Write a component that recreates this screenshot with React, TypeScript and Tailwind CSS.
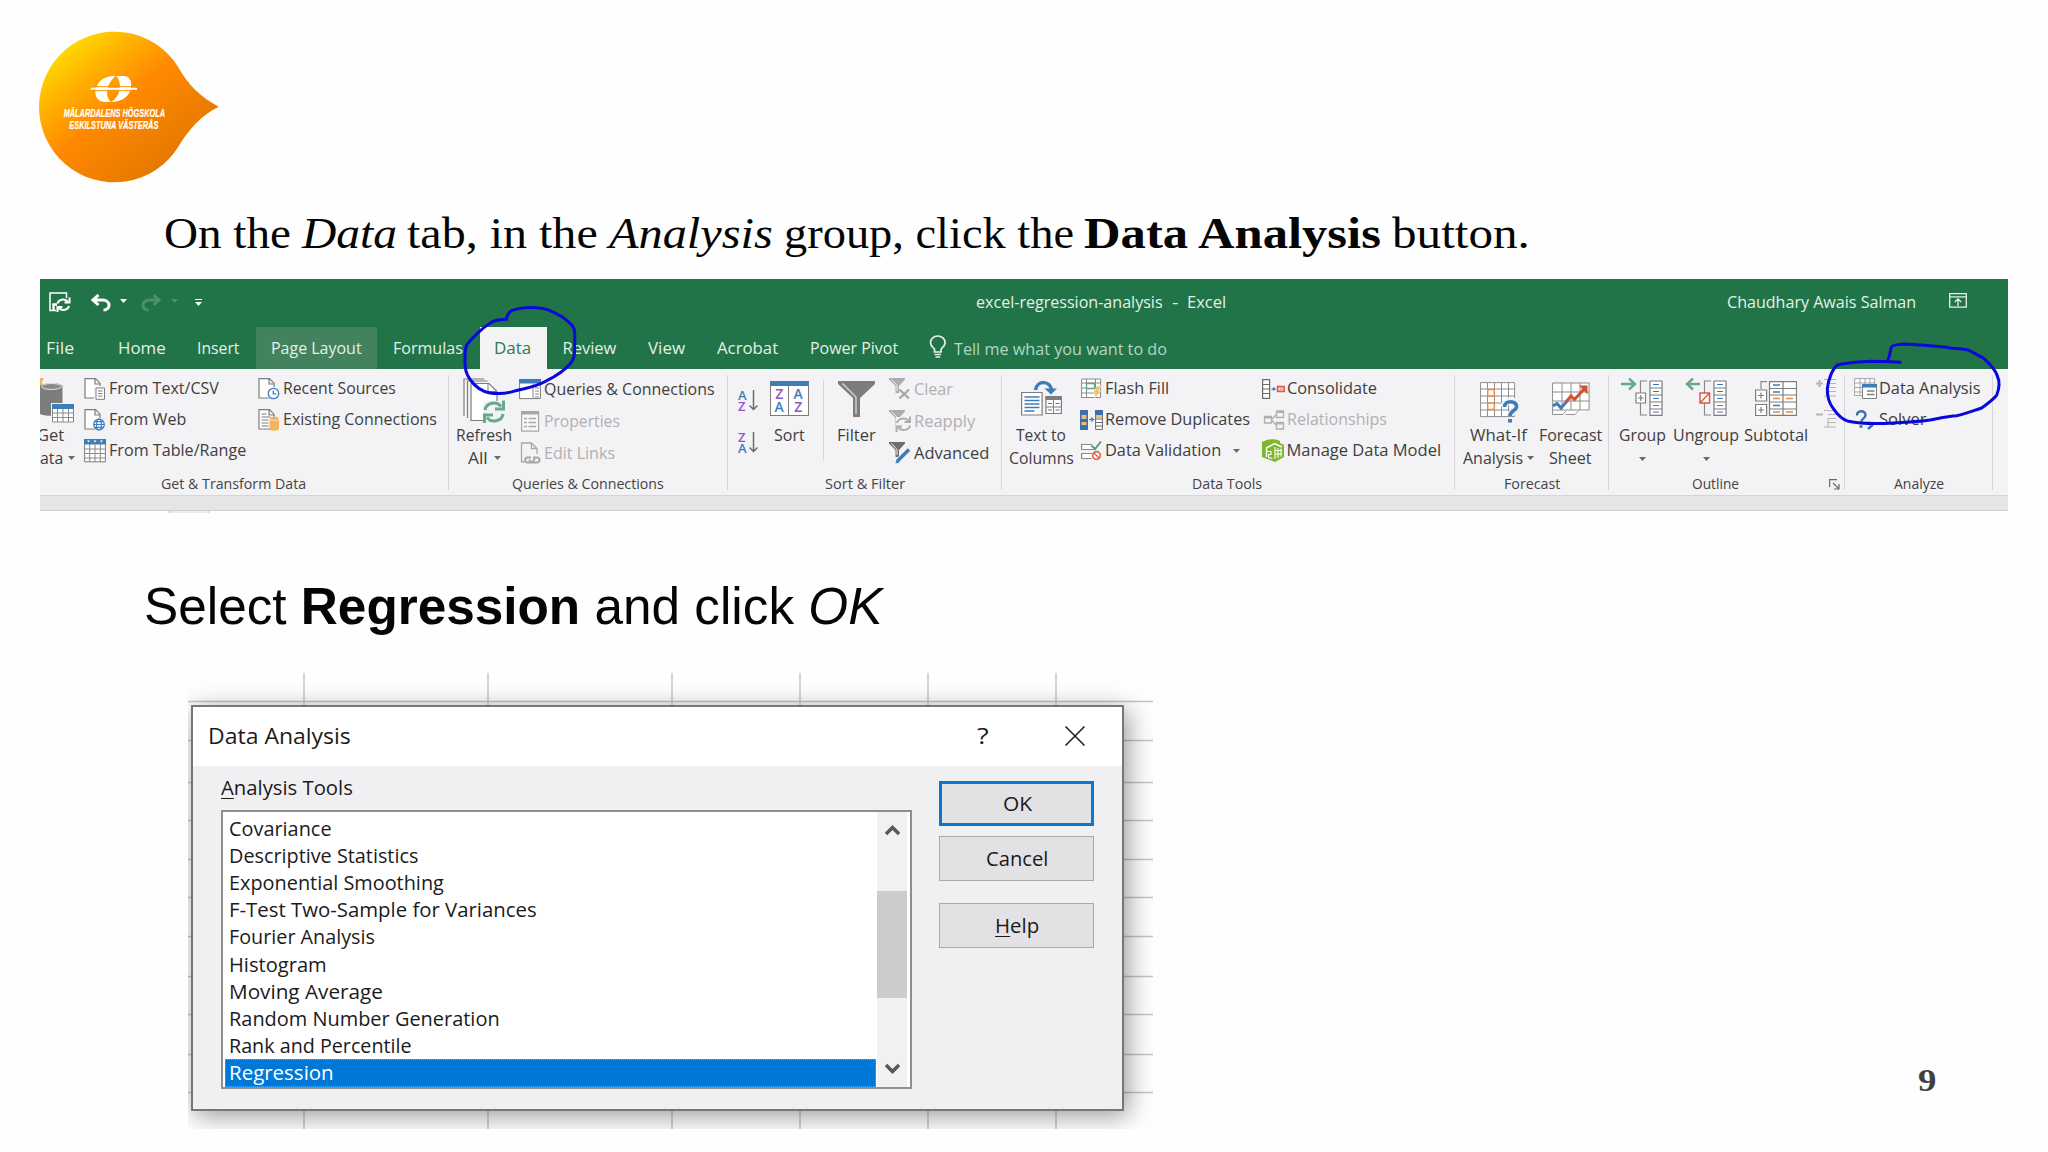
import { ReactNode, useLayoutEffect, useRef, useState } from 'react';
import clsx from 'clsx';

type TextProps = {
  w: number;
  children: ReactNode;
  className?: string;
};

// Single line of text, stretched or squeezed to a fixed width
const Text = ({ w, children, className }: TextProps) => {
  const ref = useRef<HTMLSpanElement>(null);
  const [scale, setScale] = useState(1);

  useLayoutEffect(() => {
    if (ref.current && ref.current.offsetWidth > 0) {
      setScale(w / ref.current.offsetWidth);
    }
  }, [w]);

  return (
    <span
      className={clsx('inline-block shrink-0 whitespace-nowrap', className)}
      style={{ width: w }}
    >
      <span
        ref={ref}
        className="inline-block origin-left"
        style={{ transform: `scaleX(${scale})` }}
      >
        {children}
      </span>
    </span>
  );
};

const Caret = ({ className }: { className?: string }) => (
  <svg
    width="7"
    height="4"
    viewBox="0 0 7 4"
    className={clsx('shrink-0', className)}
  >
    <path d="M0 0h7L3.5 4z" fill="currentColor" />
  </svg>
);

const Logo = () => (
  <svg width="180" height="152" viewBox="58 63 540 456">
    <defs>
      <linearGradient id="drop" x1="0.08" y1="0.15" x2="0.75" y2="0.85">
        <stop offset="0" stopColor="#ffdc00" />
        <stop offset="0.22" stopColor="#ffb400" />
        <stop offset="0.5" stopColor="#ff8a00" />
        <stop offset="1" stopColor="#e67800" />
      </linearGradient>
    </defs>
    <path
      d="M475 170C505 225 545 262 597 290C545 316 505 360 475 412A226 226 0 1 1 475 170z"
      fill="url(#drop)"
    />
    <g fill="#fff">
      <path d="M288 198C252 197 229 216 227 246C227 264 238 275 257 276L274 275C256 262 258 222 288 198z" />
      <path d="M291 198L312 198C328 199 337 210 334 230C331 258 310 275 274 276C300 262 310 224 291 198z" />
    </g>
    <path d="M222 230H346M218 242H340" stroke="#ff9300" strokeWidth="3" />
    <path d="M213 236H352" stroke="#fff" strokeWidth="6" />
    <g
      fill="#fff"
      stroke="#fff"
      strokeWidth="0.7"
      fontFamily='"Liberation Sans Narrow", "Liberation Sans", sans-serif'
      fontWeight="700"
      fontStyle="italic"
      fontSize="33"
    >
      <text x="132" y="322" textLength="304" lengthAdjust="spacingAndGlyphs">
        MÄLARDALENS HÖGSKOLA
      </text>
      <text x="149" y="358" textLength="267" lengthAdjust="spacingAndGlyphs">
        ESKILSTUNA VÄSTERÅS
      </text>
    </g>
  </svg>
);

const SaveIcon = () => (
  <svg width="22" height="21" viewBox="0 0 22 21" fill="none" stroke="#fff">
    <path d="M7 18.500H1V1h16.500v5" strokeWidth="1.500" />
    <path d="M4.500 18v-5.500H8" strokeWidth="2.400" />
    <path
      d="M8.500 11.500c1-4 7-5.500 10-2M20.500 5.500v5h-5M20 14c-1 4-7 5.500-10 2M8.500 20v-5h5"
      strokeWidth="2.100"
    />
  </svg>
);

const UndoIcon = ({ className }: { className?: string }) => (
  <svg
    width="20"
    height="18"
    viewBox="0 0 20 18"
    fill="none"
    stroke="currentColor"
    strokeWidth="3"
    className={className}
  >
    <path d="M7.500 1L2 6l5.500 5M2.500 6h9c8.500 0 8.500 10 1 10" />
  </svg>
);

const BulbIcon = () => (
  <svg width="18" height="24" viewBox="0 0 18 24" fill="none" stroke="#e4f0e8">
    <path
      d="M5.500 17v-3C3 11.500 1.500 10.500 1.500 7.800a7.300 6.800 0 0 1 14.600 0c0 2.700-1.500 3.700-4 6.200v3z"
      strokeWidth="1.700"
    />
    <path d="M5.500 19.500h6.600M6.500 22h4.600" strokeWidth="1.500" />
  </svg>
);

const RibbonOptionsIcon = () => (
  <svg width="18" height="15" viewBox="0 0 18 15" fill="none" stroke="#e4f0e8" strokeWidth="1.300">
    <path d="M.7.700h16.600v13.400H.7zM.7 3.800h16.600M9 13V6M5.800 9L9 5.800 12.200 9" />
  </svg>
);

const GetDataIcon = () => (
  <svg width="34" height="46" viewBox="0 0 34 46">
    <path d="M0 1h4L1.500 6 4 7.500 0 12z" fill="#f2b45c" />
    <path d="M0 8.500C6 5 20 5 22.500 9v27c-3 3-17 4-22.500 1z" fill="#7d7d7d" />
    <ellipse cx="11.500" cy="9.500" rx="10" ry="3" fill="#8a8a8a" stroke="#e8e8e8" />
    <path d="M11 26h23v20H11z" fill="#f3f2f4" />
    <path d="M12.500 27.500h21v17.500h-21z" fill="#fff" stroke="#8a8a8a" />
    <path d="M12 27h22v5H12z" fill="#3f7cba" />
    <path d="M12 36h22M12 40.500h22M17.500 32v13M23 32v13M28.500 32v13" stroke="#8a8a8a" />
  </svg>
);

const Page = () => (
  <path d="M1 .700h10.500l4.500 4.500V20H1zM11 1v5h5" fill="#fff" stroke="#7d7d7d" strokeWidth="1.200" />
);

const TextFileIcon = () => (
  <svg width="22" height="22" viewBox="0 0 22 22">
    <Page />
    <path d="M11.500 9.500H21V21h-9.500z" fill="#fff" stroke="#f3f2f4" strokeWidth="3" />
    <path d="M12 10h8.500v11.300H12zM14 13h4.500M14 15.500h4.500M14 18h4.500" fill="#fff" stroke="#7d7d7d" />
  </svg>
);

const WebFileIcon = () => (
  <svg width="22" height="22" viewBox="0 0 22 22">
    <Page />
    <circle cx="15" cy="15.500" r="6.500" fill="#f3f2f4" />
    <g fill="#fff" stroke="#3f7fc4" strokeWidth="1.200">
      <circle cx="15" cy="15.500" r="5.300" />
      <ellipse cx="15" cy="15.500" rx="2.400" ry="5.300" />
      <path d="M9.700 15.500h10.600M10.500 12.700h9M10.500 18.300h9" />
    </g>
  </svg>
);

const TableIcon = () => (
  <svg width="22" height="24" viewBox="0 0 22 24">
    <path d="M.6.600h20.800v22.200H.6z" fill="#fff" stroke="#7d7d7d" />
    <path d="M0 0h22v5.500H0z" fill="#3f7cba" />
    <path d="M3 1.500h3l-1.500 2zM9.500 1.500h3l-1.500 2zM16 1.500h3l-1.500 2z" fill="#fff" />
    <path d="M0 10h22M0 14.500h22M0 19h22M5.700 5v18M11 5v18M16.300 5v18" stroke="#8a8a8a" />
  </svg>
);

const RecentIcon = () => (
  <svg width="22" height="22" viewBox="0 0 22 22">
    <Page />
    <circle cx="15.500" cy="15.500" r="6.500" fill="#f3f2f4" />
    <circle cx="15.500" cy="15.500" r="5.200" fill="#fff" stroke="#3f7fc4" strokeWidth="1.300" />
    <path d="M15.300 12.500v3.300h3" fill="none" stroke="#3f7fc4" strokeWidth="1.300" />
  </svg>
);

const ConnectionsIcon = () => (
  <svg width="22" height="22" viewBox="0 0 22 22">
    <Page />
    <path d="M3.500 5h5M3.500 8h9M3.500 11h7M3.500 14h7M3.500 17h7" stroke="#7d7d7d" />
    <path d="M11.500 10c0-3 9.500-3 9.500 0v9.500c0 3-9.500 3-9.500 0z" fill="#f2b45c" />
    <path d="M11.500 10c1 2 8.500 2 9.500 0" fill="none" stroke="#fbe3bd" />
  </svg>
);

const RefreshAllIcon = () => (
  <svg width="42" height="46" viewBox="0 0 42 46" fill="none">
    <path d="M1 39V2h20M4.500 41V4h20" stroke="#7d7d7d" strokeWidth="1.200" />
    <path d="M8 43.500V6.500h18l8 8v29z" fill="#fff" stroke="#7d7d7d" strokeWidth="1.200" />
    <path d="M25 6.500v8h8" stroke="#7d7d7d" />
    <path d="M20 24h22v22H20z" fill="#f3f2f4" />
    <path
      d="M22 33c1-7.500 12-9.500 16-3.500M40.500 23.500v8.500h-8.500M40 37c-1 7.500-12 9.500-16 3.500M21.500 46.500v-8.500h8.500"
      stroke="#67a98a"
      strokeWidth="3"
    />
  </svg>
);

const QueriesIcon = () => (
  <svg width="22" height="21" viewBox="0 0 22 21">
    <path d="M.6.600h20.800v19H.6z" fill="#fff" stroke="#7d7d7d" />
    <path d="M0 0h22v4.500H0z" fill="#3f7cba" />
    <path d="M14 5v15M16 9h4M16 12h4M16 15h4M16 18h4" stroke="#8a8a8a" />
  </svg>
);

const PropertiesIcon = () => (
  <svg width="22" height="21" viewBox="0 0 22 21" stroke="#a8a8a8">
    <path d="M2.600.600h17v19.500h-17z" fill="#f8f6f8" strokeWidth="1.200" />
    <path d="M2.500 2h17" strokeWidth="3" />
    <path d="M5 7.500h3M5 11.500h3M5 15.500h3M9.500 7.500h7.500M9.500 11.500h7.500M9.500 15.500h7.500" strokeWidth="1.300" />
  </svg>
);

const EditLinksIcon = () => (
  <svg width="22" height="22" viewBox="0 0 22 22" fill="none" stroke="#a8a8a8">
    <path d="M5 20H2.500V1h10l5.500 5.500V12M12.500 1v5.500H18" strokeWidth="1.300" />
    <path
      d="M12 15.500H8.500a2.500 2.500 0 0 0 0 5H12M14 15.500h4a2.500 2.500 0 0 1 0 5h-4M10 18l3 2.500 3-4"
      strokeWidth="2"
    />
  </svg>
);

const letterColor = (letter: string) => (letter === 'A' ? 'text-[#3f7cba]' : 'text-[#9455c8]');

const SortOrderIcon = ({ first, second }: { first: string; second: string }) => (
  <span className="flex h-[23px] w-5 items-center justify-between">
    <span className="flex flex-col text-[13px] leading-[11px] font-semibold">
      <span className={letterColor(first)}>{first}</span>
      <span className={letterColor(second)}>{second}</span>
    </span>
    <svg width="9" height="23" viewBox="0 0 9 23">
      <path d="M4.500 1v20M.5 16.500l4 4 4-4" fill="none" stroke="#6b6b6b" strokeWidth="1.500" />
    </svg>
  </span>
);

const SortIcon = () => (
  <span className="flex h-[35px] w-[39px] border border-t-[5px] border-[#7d7d7d] border-t-[#3f7cba] bg-white text-[14px] leading-[12.500px] font-semibold">
    <span className="flex w-[18.500px] flex-col items-center justify-center border-r border-[#7d7d7d]">
      <span className={letterColor('Z')}>Z</span>
      <span className={letterColor('A')}>A</span>
    </span>
    <span className="flex w-[18.500px] flex-col items-center justify-center">
      <span className={letterColor('A')}>A</span>
      <span className={letterColor('Z')}>Z</span>
    </span>
  </span>
);

const FilterIcon = () => (
  <svg width="37" height="36" viewBox="0 0 37 36">
    <path d="M0 0h37v3L22 17v19h-7V17L0 3z" fill="#7d7d7d" />
    <path d="M4.500 2.500L18 16v17" fill="none" stroke="#d8d8d8" strokeWidth="1.300" />
  </svg>
);

const FilterActionIcon = ({ action }: { action: 'clear' | 'reapply' | 'advanced' }) => (
  <svg width="22" height="22" viewBox="0 0 22 22" fill="none">
    <path
      d="M0 0h16v1.500L10 8v7H6.500V8L0 1.500z"
      fill={action === 'advanced' ? '#6e6e6e' : '#acacac'}
    />
    <path d="M2.500 1.500L8 7.500V13" stroke="#f3f2f4" />
    {action === 'clear' && (
      <path d="M10.500 11.500l9.500 9M20 11.500l-9.500 9" stroke="#a8a8a8" strokeWidth="2.400" />
    )}
    {action === 'reapply' && (
      <>
        <path d="M7 7h15v15H7z" fill="#f3f2f4" />
        <path
          d="M8 13c1-5 9-6 11.500-2M21 6.500v5.500h-5.500M21 15.500c-1 5-9 6-11.500 2M7.500 22v-5.500H13"
          stroke="#acacac"
          strokeWidth="2"
        />
      </>
    )}
    {action === 'advanced' && (
      <>
        <path d="M8 20L19.500 8.500" stroke="#f3f2f4" strokeWidth="6" />
        <path d="M8.500 19L20 7.500" stroke="#3f7cba" strokeWidth="3.600" />
        <path d="M6.500 21.500l1-4 3 3z" fill="#3f7cba" />
      </>
    )}
  </svg>
);

const TextToColumnsIcon = () => (
  <svg width="41" height="36" viewBox="0 0 41 36" fill="none">
    <path d="M.6 12.500h20.500V35H.6z" fill="#fff" stroke="#7d7d7d" strokeWidth="1.200" />
    <path d="M3.500 17h15M3.500 20.500h15M3.500 24h15M3.500 27.500h15M3.500 31h10" stroke="#3f7cba" strokeWidth="1.300" />
    <path d="M25 17h15.400v16.500H25z" fill="#fff" stroke="#7d7d7d" strokeWidth="1.200" />
    <path d="M24.500 18h16" stroke="#7d7d7d" strokeWidth="4" />
    <path d="M32.500 20v13M25 27h15" stroke="#7d7d7d" />
    <path d="M27 23.500h4M34.500 23.500h4M27 30h4M34.500 30h4" stroke="#3f7cba" />
    <path d="M14.500 10C16 0 30 0 30.500 11" stroke="#3f7cba" strokeWidth="3.500" />
    <path d="M23.500 8.500h12.500L30 14.500z" fill="#3f7cba" />
  </svg>
);

const FlashFillIcon = () => (
  <svg width="22" height="21" viewBox="0 0 22 21" fill="none">
    <path d="M1.600 1h19v18.500h-19zM1.600 5h19M1.600 10h19M1.600 15h19M6.500 1v18.500M15.500 1v18.500" fill="#fff" stroke="#8a8a8a" />
    <path d="M6.500 5.500h8v5h-8z" fill="#fff" stroke="#5aa584" strokeWidth="1.300" />
    <path d="M17 8h4.500l-3 5H21l-7 8 2-6h-3z" fill="#f5c162" stroke="#f3f2f4" strokeWidth=".5" />
  </svg>
);

const RemoveDuplicatesIcon = () => (
  <svg width="23" height="20" viewBox="0 0 23 20">
    <path d="M0 0h8v20H0z" fill="#3f6fa6" />
    <path d="M1.500 5h5v4h-5zM1.500 12h5v3h-5z" fill="#eebb7e" />
    <path d="M15.600.600h6.800v18.800h-6.800z" fill="#fff" stroke="#6b6b6b" />
    <path d="M15 0h8v5h-8z" fill="#3f6fa6" />
    <path d="M16 5h6v3h-6z" fill="#eebb7e" />
    <path d="M15 9h8M15 12.500h8M15 16h8" stroke="#6b6b6b" />
    <path d="M9 9.500h4M11 7.500l2.500 2-2.500 2" fill="none" stroke="#3f7cba" strokeWidth="1.200" />
  </svg>
);

const DataValidationIcon = () => (
  <svg width="22" height="20" viewBox="0 0 22 20" fill="none">
    <path d="M12 3.500H1.600v5h13M12 12.500H1.600v5h10" fill="#fff" stroke="#8a8a8a" strokeWidth="1.200" />
    <path d="M11.500 4.500l3.500 3.500L21 .500" stroke="#4fa283" strokeWidth="2" />
    <circle cx="16.500" cy="14.500" r="3.800" fill="#fff" stroke="#e0654c" strokeWidth="1.700" />
    <path d="M14 12l5 5" stroke="#e0654c" strokeWidth="1.500" />
  </svg>
);

const ConsolidateIcon = () => (
  <svg width="23" height="20" viewBox="0 0 23 20" fill="none">
    <path d="M.6.600h7v18.800h-7zM.6 5.500h7M.6 10h7M.6 14.500h7" fill="#fff" stroke="#6b6b6b" strokeWidth="1.200" />
    <path d="M9.500 10h3.500M11.500 8.500L13 10l-1.500 1.500" stroke="#3f7cba" strokeWidth="1.300" />
    <path d="M15.600 7.600h6.600v4.800h-6.600z" fill="#fff" stroke="#dc5a44" strokeWidth="1.700" />
    <path d="M17.500 10h3" stroke="#dc5a44" />
  </svg>
);

const RelationshipsIcon = () => (
  <svg width="23" height="20" viewBox="0 0 23 20" fill="none" stroke="#b0b0b0" strokeWidth="1.300">
    <path d="M2.500 6.500h7v6.500h-7zM14.500 1h7v6.500h-7zM14.500 12.500h7V19h-7zM9.500 9.500l5-5M9.500 10l5 5.500" />
    <path d="M2.500 7.500h7M14.500 2h7M14.500 13.500h7" strokeWidth="2" />
  </svg>
);

const DataModelIcon = () => (
  <svg width="22" height="23" viewBox="0 0 22 23" fill="none">
    <path d="M0 3C5 0 12-1 18 2v2l4 2v12l-9 5-13-5z" fill="#7db72f" />
    <path d="M4.500 18V9l8-4.500L20 8" stroke="#fff" strokeWidth="1.500" />
    <path d="M13 8v12M16 9v10M19 9.500v8M13 11.500h7M13 15h7M5 12.500h4v3H6.500v3l4 1" stroke="#fff" strokeWidth="1.100" />
  </svg>
);

const WhatIfIcon = () => (
  <svg width="39" height="41" viewBox="0 0 39 41" fill="none">
    <path d="M.6.600h34v34H.6z" fill="#fff" />
    <path
      d="M.6.600h34v34H.6zM.6 7h34M.6 14h34M.6 21h34M.6 28h34M7.500.600v34M14.500.600v34M21.500.600v34M28.500.600v34"
      stroke="#8e8e8e"
    />
    <path d="M7.700 7.500h6.600v6.500H7.700zM7.700 21h6.600v6.500H7.700z" fill="#fff" stroke="#ea8b43" strokeWidth="1.500" />
    <path d="M24 25c0-8 14-8 13 0-.5 4-6.500 4-6.500 9" stroke="#f3f2f4" strokeWidth="7" />
    <path d="M24.500 25c0-7 12.500-7 12 0-.5 4-6.500 4-6.500 9" stroke="#3f7cba" strokeWidth="3.700" />
    <path d="M28 37h4v3.500h-4z" fill="#3f7cba" />
  </svg>
);

const ForecastIcon = () => (
  <svg width="38" height="34" viewBox="0 0 38 34" fill="none">
    <path d="M.6 1h36.500v27L34 29l-8 3H.6z" fill="#fff" />
    <path
      d="M.6 1h36.500v27H.6zM.6 10h36.500M.6 19h36.500M10 1v27M19 1v27M28 1v27M.6 28v4.500H11l3-3.500M14 32.500h9l4-4"
      stroke="#8e8e8e"
    />
    <path d="M1 24l4-2.500 4 4.500 7-8" stroke="#3f7cba" strokeWidth="3" />
    <path d="M14 20l5-6 3.500 3.500L33 6" stroke="#d35230" strokeWidth="3" />
    <path d="M27 3.500h8.500v9z" fill="#d35230" />
  </svg>
);

const GroupIcon = ({ ungroup }: { ungroup?: boolean }) => (
  <svg width="42" height="38" viewBox="0 0 42 38" fill="none">
    <path
      d={ungroup ? 'M15 6H2M8 .500L2 6l6 5.500' : 'M0 6h14M8 .500L14 6l-6 5.500'}
      stroke="#67a98a"
      strokeWidth="2.400"
    />
    <path d="M26 3h-6.500v12M26 37h-6.500V25" stroke="#8a8a8a" strokeWidth="1.200" />
    {ungroup ? (
      <path d="M15 15h9.500v10H15zM15.500 24.500l8.500-9" fill="#fff" stroke="#dc5a44" strokeWidth="1.500" />
    ) : (
      <path d="M15 15h9.500v10H15zM17 20h5.500M19.800 17v6" fill="#fff" stroke="#7d7d7d" strokeWidth="1.200" />
    )}
    <path
      d="M29 3h12v34.400H29zM29 10h12M29 17h12M29 24h12M29 31h12"
      fill="#fff"
      stroke="#7d7d7d"
      strokeWidth="1.200"
    />
    <path d="M32 6.500h6M32 13.500h6M32 20.500h6M32 27.500h6M32 34h6" stroke="#3f7cba" strokeWidth="1.200" />
  </svg>
);

const SubtotalIcon = () => (
  <svg width="42" height="35" viewBox="0 0 42 35" fill="none">
    <path d="M12 .600H6V8" stroke="#8a8a8a" strokeWidth="1.200" />
    <path
      d="M.6 9h11v11H.6zM.6 23.500h11v11H.6zM3 14.500h6M6 11.500v6M3 29h6M6 26v6M14.500.600h27v33.800h-27zM14.500 7.500h27M14.500 14h27M14.500 21h27M14.500 28h27M28 .600v33.800"
      fill="#fff"
      stroke="#7d7d7d"
      strokeWidth="1.200"
    />
    <path d="M18 4h7M18 11h7M18 24.500h7" stroke="#3f7cba" strokeWidth="1.300" />
    <path d="M18 17.500h7M31 17.500h7M18 31h7M31 31h7" stroke="#e08a4c" strokeWidth="1.300" />
  </svg>
);

const DetailIcon = ({ hide }: { hide?: boolean }) => (
  <svg width="20" height="19" viewBox="0 0 20 19" fill="none" stroke="#b4b4b4">
    <path d={hide ? 'M0 5.500h7' : 'M0 5.500h7M3.500 2v7'} strokeWidth="2" />
    <path d="M8 1.500h12" stroke={hide ? '#d9a7cf' : '#b4b4b4'} />
    <path d="M12 5.500h8M12 9.500h8M12 13.500h8M8 18h12M12 9v9" />
  </svg>
);

const DataAnalysisIcon = () => (
  <svg width="23" height="21" viewBox="0 0 23 21" fill="none">
    <path d="M.6.600h20v17H.6zM.6 5h20M.6 9.500h20M.6 14h20M6 .600v17M11 .600v17M16 .600v17" fill="#fff" stroke="#a5a5a5" />
    <path d="M8.500 6.500h14v14h-14z" fill="#fff" stroke="#7d7d7d" />
    <path d="M8 6h15v3.500H8z" fill="#3f7cba" />
    <path d="M13 13h7.500M13 16.500h7.500" stroke="#7d7d7d" strokeWidth="1.300" />
  </svg>
);

const SolverIcon = () => (
  <svg width="23" height="20" viewBox="0 0 23 20" fill="none" stroke="#3f6fb0">
    <path d="M3 5.500C3 0 11.500 0 11.500 5c0 3.500-4.500 3.500-4.500 8" strokeWidth="2.400" />
    <path d="M5.500 16.500h3" strokeWidth="2.600" />
    <path d="M14 12.500l4 3-4 3.500" strokeWidth="2.400" />
  </svg>
);

const LauncherIcon = () => (
  <svg width="11" height="11" viewBox="0 0 11 11" fill="none" stroke="#6b6b6b" strokeWidth="1.200">
    <path d="M.6 8V.600H8M4 4l5.500 5.500M10 5v5H5" />
  </svg>
);

type CommandProps = {
  icon: ReactNode;
  label: string;
  w: number;
  disabled?: boolean;
  caret?: boolean;
  h?: 'tall';
};

const Command = ({ icon, label, w, disabled, caret, h }: CommandProps) => (
  <div
    className={clsx(
      'flex items-center text-[16.5px]',
      h === 'tall' ? 'h-[31.800px]' : 'h-[31px]',
      disabled ? 'text-[#b1b0b2]' : 'text-[#3f3e40]',
    )}
  >
    <span className="flex w-[25px] shrink-0 items-center">{icon}</span>
    <Text w={w}>{label}</Text>
    {caret && <Caret className="ml-3 text-[#6b6b6b]" />}
  </div>
);

type BigCommandProps = {
  icon: ReactNode;
  className: string;
  children: ReactNode;
};

const BigCommand = ({ icon, className, children }: BigCommandProps) => (
  <div
    className={clsx(
      'flex shrink-0 flex-col items-center text-[16.5px] leading-[22.500px] text-[#3f3e40]',
      className,
    )}
  >
    <span className="mb-px flex h-[50px] items-end justify-center">{icon}</span>
    {children}
  </div>
);

type GroupProps = {
  label: string;
  labelW: number;
  className: string;
  labelClassName?: string;
  children: ReactNode;
  launcher?: boolean;
};

const Group = ({ label, labelW, className, labelClassName, children, launcher }: GroupProps) => (
  <div className={clsx('relative flex shrink-0 flex-col', className)}>
    <div className="flex h-[103px] pt-1">{children}</div>
    <div
      className={clsx(
        'flex h-[22px] items-center justify-center text-[14px] text-[#454446]',
        labelClassName,
      )}
    >
      <Text w={labelW}>{label}</Text>
    </div>
    <span className="absolute top-1.5 right-0 h-[115px] w-px bg-[#d8d6d9]" />
    {launcher && (
      <span className="absolute right-[5px] bottom-[5px]">
        <LauncherIcon />
      </span>
    )}
  </div>
);

const TitleBar = () => (
  <div className="flex h-[47px] items-center pl-[9px] text-[16.5px] text-[#e4f0e8]">
    <SaveIcon />
    <UndoIcon className="ml-5 text-white" />
    <Caret className="ml-[9px] -mt-1 text-white" />
    <UndoIcon className="ml-3.5 -scale-x-100 text-[#4c9168]" />
    <Caret className="ml-2.5 -mt-1 text-[#4c9168]" />
    <span className="ml-[17px] flex flex-col gap-0.5">
      <span className="h-[1.500px] w-[7px] bg-white" />
      <Caret className="text-white" />
    </span>
    <Text w={187} className="ml-[774px]">excel-regression-analysis</Text>
    <Text w={6} className="ml-[9px]">-</Text>
    <Text w={39} className="ml-[9px]">Excel</Text>
    <Text w={189} className="ml-[501px]">Chaudhary Awais Salman</Text>
    <span className="ml-[33px] -mt-1">
      <RibbonOptionsIcon />
    </span>
  </div>
);

const TabBar = () => (
  <div className="mt-px flex h-[42px] items-center text-[16.5px] text-[#e4f0e8]">
    <Text w={28} className="ml-1.5">File</Text>
    <Text w={48} className="ml-11">Home</Text>
    <Text w={42} className="ml-[31px]">Insert</Text>
    <div className="ml-[17px] flex h-full w-[121px] items-center justify-center bg-[#42825d]">
      <Text w={91}>Page Layout</Text>
    </div>
    <Text w={70} className="ml-4">Formulas</Text>
    <div className="ml-[17px] flex h-full w-[66.500px] items-center justify-center bg-[#f4f3f4] pr-px text-[#2c7a50]">
      <Text w={37}>Data</Text>
    </div>
    <Text w={54} className="ml-4">Review</Text>
    <Text w={37} className="ml-[31px]">View</Text>
    <Text w={61} className="ml-8">Acrobat</Text>
    <Text w={88} className="ml-8">Power Pivot</Text>
    <span className="ml-[31px] -mt-0.5">
      <BulbIcon />
    </span>
    <Text w={213} className="mt-0.5 ml-[7px] text-[#b5d6c2]">Tell me what you want to do</Text>
  </div>
);

const Ribbon = () => (
  <div className="flex h-[126px] overflow-hidden bg-[#f3f2f4]">
    <Group label="Get & Transform Data" labelW={145} className="w-[409px]" labelClassName="pr-[22px]">
      <BigCommand icon={<GetDataIcon />} className="w-[34px] items-start">
        <Text w={27} className="-ml-[3px]">Get</Text>
        <span className="flex items-center">
          <Text w={23}>ata</Text>
          <Caret className="ml-[5px] text-[#6b6b6b]" />
        </span>
      </BigCommand>
      <div className="ml-2.5 w-[174px]">
        <Command icon={<TextFileIcon />} label="From Text/CSV" w={110} />
        <Command icon={<WebFileIcon />} label="From Web" w={77} />
        <Command icon={<TableIcon />} label="From Table/Range" w={137} />
      </div>
      <div>
        <Command icon={<RecentIcon />} label="Recent Sources" w={113} />
        <Command icon={<ConnectionsIcon />} label="Existing Connections" w={154} />
      </div>
    </Group>
    <Group label="Queries & Connections" labelW={152} className="w-[279px]" labelClassName="pr-0.5">
      <BigCommand icon={<RefreshAllIcon />} className="w-[70px]">
        <Text w={56}>Refresh</Text>
        <span className="flex items-center">
          <Text w={20}>All</Text>
          <Caret className="ml-1.5 text-[#6b6b6b]" />
        </span>
      </BigCommand>
      <div className="pt-[0.500px]">
        <Command h="tall" icon={<QueriesIcon />} label="Queries & Connections" w={171} />
        <Command h="tall" icon={<PropertiesIcon />} label="Properties" w={76} disabled />
        <Command h="tall" icon={<EditLinksIcon />} label="Edit Links" w={71} disabled />
      </div>
    </Group>
    <Group label="Sort & Filter" labelW={80} className="w-[274px]">
      <div className="mt-4 ml-2.5 flex flex-col gap-[19px]">
        <SortOrderIcon first="A" second="Z" />
        <SortOrderIcon first="Z" second="A" />
      </div>
      <BigCommand icon={<span className="mb-[7px]"><SortIcon /></span>} className="mr-[3px] w-[62px]">
        <Text w={31}>Sort</Text>
      </BigCommand>
      <span className="mt-[7px] h-[81px] w-px bg-[#d8d6d9]" />
      <BigCommand icon={<span className="mb-1.5"><FilterIcon /></span>} className="w-[65px]">
        <Text w={39}>Filter</Text>
      </BigCommand>
      <div className="pt-[0.500px]">
        <Command h="tall" icon={<FilterActionIcon action="clear" />} label="Clear" w={39} disabled />
        <Command h="tall" icon={<FilterActionIcon action="reapply" />} label="Reapply" w={61} disabled />
        <Command h="tall" icon={<FilterActionIcon action="advanced" />} label="Advanced" w={75} />
      </div>
    </Group>
    <Group label="Data Tools" labelW={70} className="w-[453px]" labelClassName="pr-[3px]">
      <BigCommand icon={<span className="mb-[7px]"><TextToColumnsIcon /></span>} className="w-[78px]">
        <Text w={50}>Text to</Text>
        <Text w={65}>Columns</Text>
      </BigCommand>
      <div className="w-[181.500px]">
        <Command icon={<FlashFillIcon />} label="Flash Fill" w={64} />
        <Command icon={<RemoveDuplicatesIcon />} label="Remove Duplicates" w={145} />
        <Command icon={<DataValidationIcon />} label="Data Validation" w={116} caret />
      </div>
      <div>
        <Command icon={<ConsolidateIcon />} label="Consolidate" w={90} />
        <Command icon={<RelationshipsIcon />} label="Relationships" w={100} disabled />
        <Command icon={<DataModelIcon />} label="Manage Data Model" w={155} />
      </div>
    </Group>
    <Group label="Forecast" labelW={56} className="w-[154px]">
      <BigCommand icon={<span className="-mr-0.5"><WhatIfIcon /></span>} className="ml-1.5 w-[74px]">
        <Text w={57}>What-If</Text>
        <span className="flex items-center">
          <Text w={60}>Analysis</Text>
          <Caret className="ml-1 text-[#6b6b6b]" />
        </span>
      </BigCommand>
      <BigCommand icon={<span className="mb-[7px]"><ForecastIcon /></span>} className="w-[71px]">
        <Text w={63}>Forecast</Text>
        <Text w={43}>Sheet</Text>
      </BigCommand>
    </Group>
    <Group label="Outline" labelW={47} className="w-[236px]" labelClassName="pr-[23px]" launcher>
      <BigCommand icon={<span className="mb-[7px]"><GroupIcon /></span>} className="ml-[5px] w-[56px]">
        <Text w={47}>Group</Text>
        <Caret className="mt-2.5 text-[#6b6b6b]" />
      </BigCommand>
      <BigCommand icon={<span className="mb-[7px]"><GroupIcon ungroup /></span>} className="ml-[3px] w-[66px]">
        <Text w={66}>Ungroup</Text>
        <Caret className="mt-2.5 text-[#6b6b6b]" />
      </BigCommand>
      <BigCommand icon={<span className="mb-[7px]"><SubtotalIcon /></span>} className="ml-[5px] w-[64px]">
        <Text w={64}>Subtotal</Text>
      </BigCommand>
      <div className="mt-[5px] ml-2 flex flex-col gap-3">
        <DetailIcon />
        <DetailIcon hide />
      </div>
    </Group>
    <Group label="Analyze" labelW={50} className="w-[148px]">
      <div className="ml-[9px]">
        <Command icon={<DataAnalysisIcon />} label="Data Analysis" w={102} />
        <Command icon={<SolverIcon />} label="Solver" w={47} />
      </div>
    </Group>
  </div>
);

const ExcelWindow = () => (
  <div className="relative mt-[21px] ml-10 h-[234px] w-[1968px] font-['Open_Sans',sans-serif]">
    <div className="flex flex-col bg-[#217447]">
      <TitleBar />
      <TabBar />
    </div>
    <Ribbon />
    <div className="h-4 border-t border-b border-t-[#d6d4d7] border-b-[#cfcdd0] bg-[#e6e4e7]" />
    <div className="ml-32 h-[2px] w-[42px] border-x border-[#cfcdd0] bg-[#ececee]" />
    {/* hand-drawn circles round the Data tab and the Data Analysis button */}
    <svg
      className="absolute top-[21px] left-[400px]"
      width="150"
      height="100"
      viewBox="0 90 450 300"
      fill="none"
      stroke="#0808dc"
      strokeWidth="9"
      strokeLinecap="round"
      strokeLinejoin="round"
    >
      <path d="M200 148C180 149 165 148 150 160C125 175 95 205 80 225C74 240 75 260 75 280C76 300 78 310 90 328C105 350 125 364 150 369C175 372 200 371 220 364C255 355 290 350 320 332C350 318 375 300 392 280C402 268 405 250 404 230C403 210 408 185 400 172C385 150 350 128 320 118C290 110 240 111 215 122C205 127 202 135 198 148" />
    </svg>
    <svg
      className="absolute top-[51px] left-[1780px]"
      width="190"
      height="120"
      viewBox="360 180 570 360"
      fill="none"
      stroke="#0808dc"
      strokeWidth="9"
      strokeLinecap="round"
      strokeLinejoin="round"
    >
      <path d="M601 277C560 275 540 274 510 274C470 276 440 277 412 285C396 298 385 330 382 355C381 380 388 400 400 416C415 438 430 450 445 454C490 463 540 462 590 458C640 456 660 454 690 450C730 442 745 438 770 437C800 430 825 420 845 414C865 400 880 388 890 376C898 355 900 335 892 318C885 295 865 278 850 264C835 258 820 245 800 239C775 234 760 237 740 232C700 227 650 224 610 222C595 224 580 224 575 230C570 240 572 252 564 269" />
    </svg>
  </div>
);

const tools = [
  { name: 'Covariance', w: 103 },
  { name: 'Descriptive Statistics', w: 189 },
  { name: 'Exponential Smoothing', w: 215 },
  { name: 'F-Test Two-Sample for Variances', w: 308 },
  { name: 'Fourier Analysis', w: 146 },
  { name: 'Histogram', w: 98 },
  { name: 'Moving Average', w: 154 },
  { name: 'Random Number Generation', w: 271 },
  { name: 'Rank and Percentile', w: 183 },
  { name: 'Regression', w: 105 },
];

const columnLines = [116, 300, 484, 612, 740, 868];
const rowLines = [28, 67, 109, 147, 186, 224, 263, 303, 341, 381, 419];

const DialogButton = ({ children, className }: { children: ReactNode; className?: string }) => (
  <button
    type="button"
    className={clsx(
      'flex h-[45px] w-[155px] items-center justify-center bg-[#e2e1e3]',
      className ?? 'border border-[#a9a8aa]',
    )}
  >
    {children}
  </button>
);

const DataAnalysisDialog = () => (
  <div className="absolute top-8 left-[3px] flex h-[406px] w-[933px] flex-col border-2 border-[#77777a] bg-[#f0eff1] text-[19.500px] text-[#1b1a1c] shadow-[4px_5px_24px_rgba(0,0,0,0.4)]">
    <div className="flex h-[59px] items-center bg-white pb-px pl-[15px] text-[22.500px]">
      <Text w={143}>Data Analysis</Text>
      <Text w={12} className="ml-[626px]">?</Text>
      <svg width="20" height="20" viewBox="0 0 20 20" className="ml-[76px]">
        <path d="M.5.500l19 19M19.500.500l-19 19" stroke="#1b1a1c" strokeWidth="1.500" />
      </svg>
    </div>
    <div className="flex pl-7">
      <div className="mt-[7px]">
        <Text w={132} className="block leading-[29px]">
          <span className="underline underline-offset-[3px]">A</span>nalysis Tools
        </Text>
        <div className="mt-[8px] flex h-[279px] w-[691px] border-2 border-[#8e8d90] bg-white">
          <ul className="w-[654px] py-[2.500px] pl-0.5">
            {tools.map(({ name, w }) => (
              <li
                key={name}
                className={clsx(
                  'flex h-[27.200px] w-[651px] items-center pl-1',
                  name === 'Regression' &&
                    'bg-[#0078d7] text-white outline-1 -outline-offset-1 outline-dotted outline-[#c98a4a]',
                )}
              >
                <Text w={w}>{name}</Text>
              </li>
            ))}
          </ul>
          <div className="flex w-[30px] flex-col items-center bg-[#f1f0f2]">
            <svg width="15" height="11" viewBox="0 0 15 11" className="mt-[13px]">
              <path d="M1 9l6.500-6.500L14 9" fill="none" stroke="#58575a" strokeWidth="3.500" />
            </svg>
            <div className="mt-[55px] h-[107px] w-full bg-[#cccbcd]" />
            <svg width="15" height="11" viewBox="0 0 15 11" className="mt-[65px]">
              <path d="M1 2l6.500 6.500L14 2" fill="none" stroke="#58575a" strokeWidth="3.500" />
            </svg>
          </div>
        </div>
      </div>
      <div className="mt-[15px] ml-[27px]">
        <DialogButton className="border-[3px] border-[#0b76d3]">
          <Text w={29} className="mt-px">OK</Text>
        </DialogButton>
        <div className="mt-2.5">
          <DialogButton>
            <Text w={62} className="mr-px">Cancel</Text>
          </DialogButton>
        </div>
        <div className="mt-[22px]">
          <DialogButton>
            <Text w={44} className="mr-px">
              <span className="underline underline-offset-[3px]">H</span>elp
            </Text>
          </DialogButton>
        </div>
      </div>
    </div>
  </div>
);

const Sheet = () => (
  <div className="relative h-[456px] w-[965px] overflow-hidden font-['Open_Sans',sans-serif]">
    <svg width="965" height="456" className="absolute inset-0">
      {columnLines.map((x) => (
        <path key={x} d={`M${x} 0v456`} stroke="#c4c3c5" strokeWidth="1.400" />
      ))}
      {rowLines.map((y) => (
        <path key={y} d={`M0 ${y}.500h965`} stroke="#c4c3c5" strokeWidth="1.400" />
      ))}
    </svg>
    <DataAnalysisDialog />
  </div>
);

export default function App() {
  return (
    <main className="h-[1152px] w-[2048px] overflow-hidden bg-[#fefefe] pt-[31px] text-[#050505]">
      <div className="ml-[39px] h-[151px]">
        <Logo />
      </div>
      <p className="mt-[26px] ml-[164px] flex font-['Liberation_Serif',serif] text-[44.500px] leading-[51px]">
        <Text w={127}>On the</Text>
        <Text w={95} className="ml-[11px] italic">Data</Text>
        <Text w={191} className="ml-2.5">tab, in the</Text>
        <Text w={164} className="ml-[11px] italic">Analysis</Text>
        <Text w={290} className="ml-[11px]">group, click the</Text>
        <Text w={297} className="ml-2.5 font-bold">Data Analysis</Text>
        <Text w={138} className="ml-[11px]">button.</Text>
      </p>
      <div className="-mt-px">
        <ExcelWindow />
      </div>
      <p className="mt-[64px] ml-[144px] font-['Liberation_Sans',sans-serif] text-[51.300px] leading-[60px]">
        Select <b>Regression</b> and click <i>OK</i>
      </p>
      <div className="mt-[36px] ml-[188px] flex items-end">
        <Sheet />
        <span className="mb-7 ml-[764.500px] font-['Liberation_Serif',serif] text-[31px] leading-10 font-bold text-[#404040]">
          <Text w={19}>9</Text>
        </span>
      </div>
    </main>
  );
}
